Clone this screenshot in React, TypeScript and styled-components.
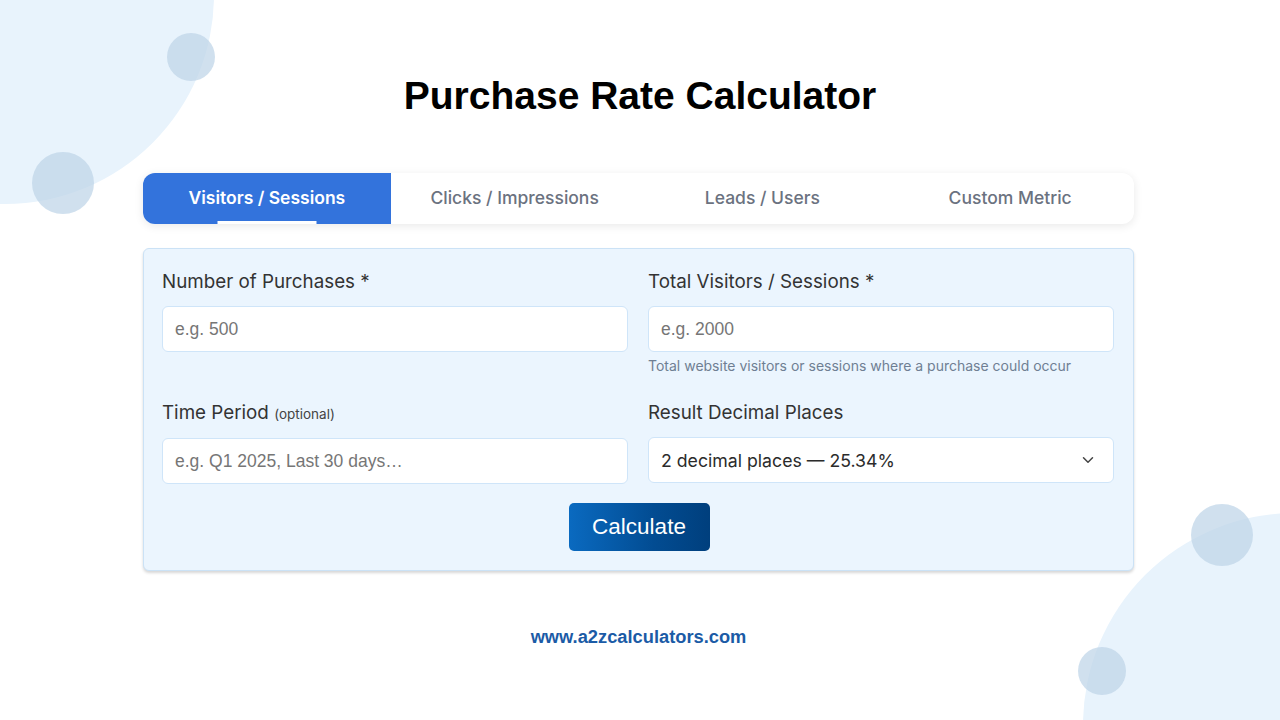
import React from 'react'
import styled, { createGlobalStyle } from 'styled-components'
import { ChevronDown } from 'lucide-react'

const GlobalStyle = createGlobalStyle`
  html, body {
    margin: 0;
    padding: 0;
    background: #ffffff;
  }
  * {
    box-sizing: border-box;
  }
`

const Page = styled.div`
  position: relative;
  width: 1280px;
  height: 720px;
  overflow: hidden;
  background: #ffffff;
  font-family: Inter, 'Liberation Sans', sans-serif;
`

const Blob = styled.div<{ x: number; y: number; r: number; tone: 'light' | 'dot' }>`
  position: absolute;
  left: ${(p) => p.x - p.r}px;
  top: ${(p) => p.y - p.r}px;
  width: ${(p) => p.r * 2}px;
  height: ${(p) => p.r * 2}px;
  border-radius: 50%;
  background: ${(p) => (p.tone === 'light' ? '#e8f3fc' : 'rgba(190, 212, 232, 0.72)')};
`

const Content = styled.div`
  position: relative;
  width: 991px;
  margin-left: 143px;
  padding-top: 74px;
  display: flex;
  flex-direction: column;
`

const Title = styled.h1`
  margin: 0;
  text-align: center;
  font-family: 'Liberation Sans', Arial, sans-serif;
  font-weight: 700;
  font-size: 39px;
  line-height: 44px;
  color: #000000;
  padding-left: 3px;
`

const TabBar = styled.div`
  margin-top: 55px;
  height: 51px;
  display: grid;
  grid-template-columns: repeat(4, 1fr);
  background: #ffffff;
  border-radius: 12px;
  box-shadow: 0 2px 10px rgba(0, 0, 0, 0.09);
`

const Tab = styled.div<{ active?: boolean }>`
  position: relative;
  display: flex;
  align-items: center;
  justify-content: center;
  font-size: 17.5px;
  font-weight: ${(p) => (p.active ? 600 : 500)};
  color: ${(p) => (p.active ? '#ffffff' : '#6b7280')};
  background: ${(p) => (p.active ? '#3373dc' : 'transparent')};
  border-radius: ${(p) => (p.active ? '12px 0 0 12px' : '0')};
  padding-bottom: 2px;
`

const Underline = styled.span`
  position: absolute;
  bottom: 0;
  left: 50%;
  width: 99px;
  height: 3px;
  transform: translateX(-50%);
  background: #ffffff;
`

const Panel = styled.div`
  margin-top: 24px;
  background: #ebf5fe;
  border: 1px solid #cbe2f6;
  border-radius: 6px;
  box-shadow: 0 2px 3px rgba(0, 0, 0, 0.16);
  padding: 21px 19px 19px 18px;
  display: flex;
  flex-direction: column;
  align-items: center;
`

const FieldGrid = styled.div`
  width: 100%;
  display: grid;
  grid-template-columns: 1fr 1fr;
  column-gap: 20px;
  row-gap: 27px;
`

const Field = styled.div`
  display: flex;
  flex-direction: column;
`

const Label = styled.label`
  font-size: 18.8px;
  line-height: 24px;
  color: #333333;
  font-weight: 400;
`

const Optional = styled.span`
  font-size: 13.5px;
  color: #444444;
`

const Input = styled.div`
  margin-top: 12px;
  height: 46px;
  background: #ffffff;
  border: 1px solid #cfe5f9;
  border-radius: 6px;
  padding: 0 12px;
  display: flex;
  align-items: center;
  justify-content: space-between;
`

const Placeholder = styled.span`
  font-family: 'Liberation Sans', Arial, sans-serif;
  font-size: 17.5px;
  color: #767676;
`

const SelectValue = styled.span`
  font-size: 17.7px;
  color: #2b2b2b;
`

const Hint = styled.div`
  margin-top: 6px;
  font-size: 14px;
  line-height: 16px;
  color: #6f7f93;
`

const CalcButton = styled.button`
  margin-top: 19px;
  width: 141px;
  height: 48px;
  border: none;
  border-radius: 5px;
  background: linear-gradient(90deg, #0a6ac0 0%, #024c92 60%, #003f7d 100%);
  color: #ffffff;
  font-family: 'Liberation Sans', Arial, sans-serif;
  font-size: 22.5px;
  margin-left: 2px;
`

const Footer = styled.div`
  margin-top: 56px;
  text-align: center;
  font-family: 'Liberation Sans', Arial, sans-serif;
  font-weight: 700;
  font-size: 18.3px;
  line-height: 20px;
  color: #1b5ba6;
`

const tabs = ['Visitors / Sessions', 'Clicks / Impressions', 'Leads / Users', 'Custom Metric']

export default function App() {
  return (
    <Page>
      <GlobalStyle />
      <Blob x={5} y={-5} r={209} tone="light" />
      <Blob x={1295} y={725} r={212} tone="light" />
      <Blob x={191} y={57} r={24} tone="dot" />
      <Blob x={63} y={183} r={31} tone="dot" />
      <Blob x={1222} y={535} r={31} tone="dot" />
      <Blob x={1102} y={671} r={24} tone="dot" />
      <Content>
        <Title>Purchase Rate Calculator</Title>
        <TabBar>
          {tabs.map((t, i) => (
            <Tab key={t} active={i === 0}>
              {t}
              {i === 0 && <Underline />}
            </Tab>
          ))}
        </TabBar>
        <Panel>
          <FieldGrid>
            <Field>
              <Label>Number of Purchases *</Label>
              <Input>
                <Placeholder>e.g. 500</Placeholder>
              </Input>
            </Field>
            <Field>
              <Label>Total Visitors / Sessions *</Label>
              <Input>
                <Placeholder>e.g. 2000</Placeholder>
              </Input>
              <Hint>Total website visitors or sessions where a purchase could occur</Hint>
            </Field>
            <Field>
              <Label>
                Time Period <Optional>(optional)</Optional>
              </Label>
              <Input>
                <Placeholder>e.g. Q1 2025, Last 30 days…</Placeholder>
              </Input>
            </Field>
            <Field>
              <Label>Result Decimal Places</Label>
              <Input>
                <SelectValue>2 decimal places — 25.34%</SelectValue>
                <ChevronDown size={18} color="#444" strokeWidth={2} style={{ marginRight: 4 }} />
              </Input>
            </Field>
          </FieldGrid>
          <CalcButton>Calculate</CalcButton>
        </Panel>
        <Footer>www.a2zcalculators.com</Footer>
      </Content>
    </Page>
  )
}
